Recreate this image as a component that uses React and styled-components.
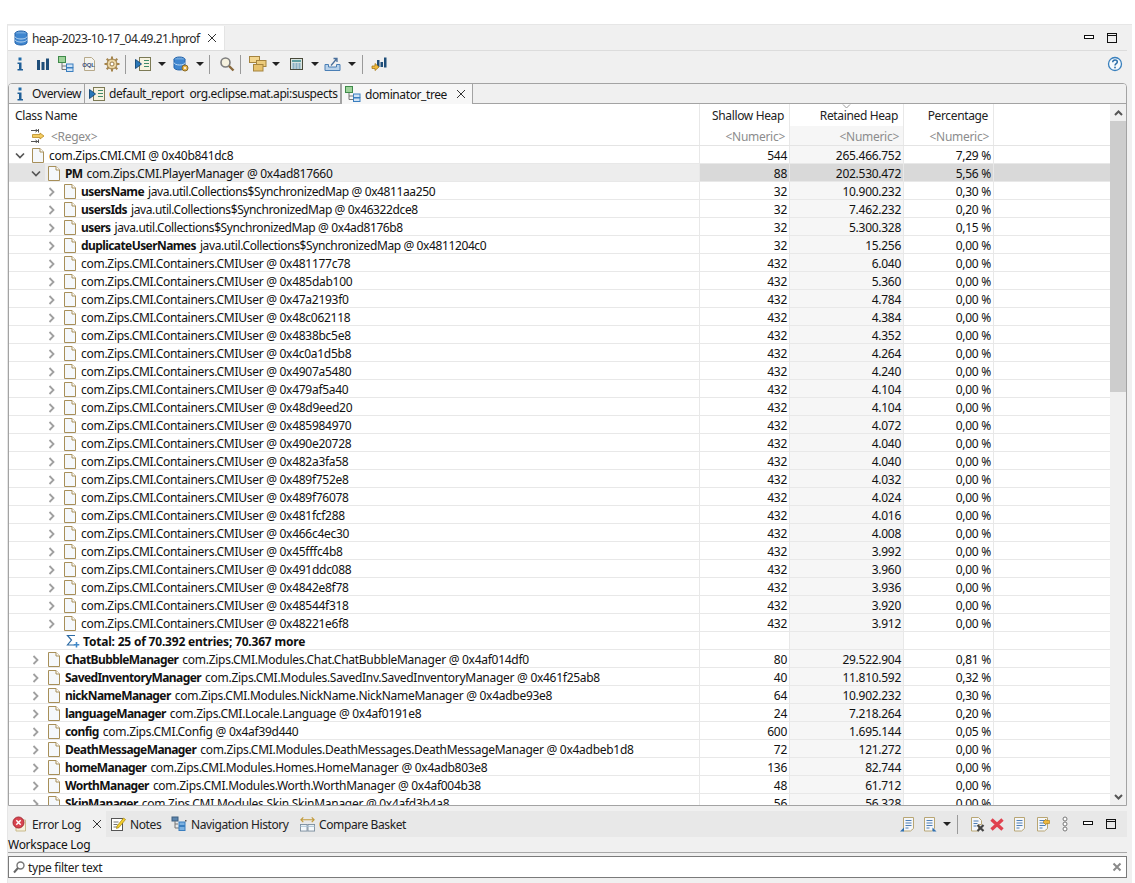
import React from "react";
import styled, { createGlobalStyle } from "styled-components";

const GlobalStyle = createGlobalStyle`
  html, body {
    margin: 0;
    padding: 0;
    background: #fff;
    overflow: hidden;
  }
  * { box-sizing: border-box; }
`;

const Page = styled.div`
  width: 1135px;
  height: 883px;
  padding: 24px 3px 0 7px;
  display: flex;
  flex-direction: column;
  font-family: "Noto Sans", "Open Sans", sans-serif;
  font-size: 12px;
  letter-spacing: -0.28px;
  color: #111;
  overflow: hidden;
`;

const Shell = styled.div`
  flex: 1;
  min-height: 0;
  display: flex;
  flex-direction: column;
  background: #f0f0f0;
  padding-right: 5px;
  border-top: 1px solid #e6e6e6;
  border-left: 1px solid #e6e6e6;
`;

const EditorTabs = styled.div`
  height: 26px;
  flex: none;
  display: flex;
  align-items: stretch;
  justify-content: space-between;
  border-bottom: 1px solid #dcdcdc;
`;

const EditorTab = styled.div`
  width: 217px;
  margin-top: 1px;
  background: #fff;
  display: flex;
  align-items: center;
  padding-left: 5px;
  gap: 3px;
  border-right: 1px solid #e4e4e4;
  font-size: 12px;
  letter-spacing: -0.47px;
  color: #2a2a2a;
  white-space: nowrap;
`;

const TabClose = styled.span`
  display: inline-flex;
  margin-left: ${(p) => p.$left || 6}px;
`;

const WindowButtons = styled.div`
  display: flex;
  align-items: center;
  gap: 11px;
  padding-right: 9px;
`;

const Toolbar = styled.div`
  height: 32px;
  flex: none;
  display: flex;
  align-items: center;
  padding: 0 4px 6px 0;
`;

const ToolButton = styled.span`
  width: ${(p) => p.$w || 23}px;
  height: 18px;
  flex: none;
  display: inline-flex;
  align-items: center;
  justify-content: center;
`;

const Caret = styled.span`
  width: 9px;
  margin: 0 ${(p) => p.$right ?? 6}px 0 ${(p) => p.$left ?? 1}px;
  height: 18px;
  flex: none;
  display: inline-flex;
  align-items: center;
  justify-content: center;
  &::before {
    content: "";
    border-left: 4px solid transparent;
    border-right: 4px solid transparent;
    border-top: 4px solid #222;
  }
`;

const Separator = styled.span`
  width: 1px;
  height: 19px;
  flex: none;
  background: #9a9a9a;
  margin: 0 ${(p) => p.$right ?? 6}px 0 ${(p) => p.$left ?? 6}px;
`;

const Spring = styled.span`
  flex: 1;
`;

const Folder = styled.div`
  flex: none;
  height: 723px;
  display: flex;
  flex-direction: column;
  background: #fff;
  border: 1px solid #a3a3a3;
  border-radius: 4px 4px 0 0;
  overflow: hidden;
`;

const FolderTabs = styled.div`
  height: 20px;
  flex: none;
  display: flex;
  background: #f0f0f0;
  letter-spacing: -0.4px;
`;

const FolderTab = styled.div`
  height: 20px;
  width: ${(p) => p.$w}px;
  flex: none;
  display: flex;
  align-items: center;
  gap: 4px;
  padding-left: ${(p) => p.$pad || 4}px;
  border-right: 1px solid #a3a3a3;
  border-bottom: ${(p) => (p.$active ? "none" : "1px solid #a3a3a3")};
  background: ${(p) => (p.$active ? "#f7f7f7" : "#f0f0f0")};
  border-left: ${(p) => (p.$active ? "1px solid #a3a3a3" : "none")};
  color: #161616;
  white-space: pre;
`;

const FolderFill = styled.div`
  flex: 1;
  border-bottom: 1px solid #a3a3a3;
`;

const TableArea = styled.div`
  flex: 1;
  min-height: 0;
  display: flex;
`;

const Table = styled.div`
  flex: 1;
  min-width: 0;
  display: flex;
  flex-direction: column;
  overflow: hidden;
`;

const HeadRow = styled.div`
  height: 22px;
  flex: none;
  display: flex;
  letter-spacing: -0.36px;
`;

const HeadCell = styled.div`
  width: ${(p) => p.$w}px;
  flex: none;
  display: flex;
  align-items: center;
  justify-content: ${(p) => (p.$left ? "flex-start" : "flex-end")};
  padding: ${(p) => (p.$left ? "0 0 0 6px" : "0 5px 0 0")};
  border-right: 1px solid #e8e8e8;
  color: #222;
  position: relative;
`;

const SortMark = styled.span`
  position: absolute;
  top: 0;
  left: 52px;
  line-height: 0;
`;

const FilterRow = styled.div`
  height: 20px;
  flex: none;
  display: flex;
  border-bottom: 1px solid #e4e4e4;
`;

const FilterCell = styled.div`
  width: ${(p) => p.$w}px;
  flex: none;
  display: flex;
  align-items: center;
  justify-content: ${(p) => (p.$left ? "flex-start" : "flex-end")};
  gap: 4px;
  padding: ${(p) => (p.$left ? "1px 0 0 21px" : "1px 4px 0 0")};
  border-right: 1px solid #e8e8e8;
  background: ${(p) => (p.$sorted ? "#f6f6f6" : "#fff")};
  color: #8c8c8c;
`;

const Filler = styled.div`
  flex: 1;
`;

const Rows = styled.div`
  flex: 1;
  min-height: 0;
  overflow: hidden;
`;

const Row = styled.div`
  height: 18px;
  display: flex;
  border-bottom: 1px solid #e8e8e8;
  background: ${(p) => (p.$selected ? "#d9d9d9" : "#fff")};
`;

const NameCell = styled.div`
  width: 691px;
  flex: none;
  display: flex;
  align-items: center;
  padding: 1px 0 0 ${(p) => 6 + p.$level * 16}px;
  border-right: 1px solid #e8e8e8;
  background: ${(p) =>
    p.$selected
      ? "linear-gradient(to right, #e3e3e3 0 36px, #ededed 36px)"
      : "#fff"};
  white-space: pre;
  overflow: hidden;
`;

const Expander = styled.span`
  width: 10px;
  height: 17px;
  flex: none;
  margin-right: 7px;
  display: inline-flex;
  align-items: center;
  justify-content: center;
  padding-top: 1px;
`;

const NodeIcon = styled.span`
  flex: none;
  width: 12px;
  margin-right: 5px;
  display: inline-flex;
`;

const SumSlot = styled.span`
  flex: none;
  width: 14px;
  margin: 0 3px 0 2px;
  display: inline-flex;
`;

const Field = styled.b`
  font-weight: 700;
  margin-right: 4px;
  letter-spacing: -0.58px;
`;

const ClassText = styled.span`
  letter-spacing: ${(p) => (p.$tight ? "-0.39px" : "-0.28px")};
`;

const TotalLabel = styled.b`
  font-weight: 700;
  letter-spacing: -0.2px;
`;

const ValueCell = styled.div`
  width: ${(p) => p.$w}px;
  flex: none;
  display: flex;
  align-items: center;
  justify-content: flex-end;
  padding: 1px 2px 0 0;
  border-right: 1px solid #e8e8e8;
  background: ${(p) => (p.$selected ? "#d9d9d9" : p.$sorted ? "#f6f6f6" : "transparent")};
`;

const Scrollbar = styled.div`
  width: 16px;
  flex: none;
  display: flex;
  flex-direction: column;
  background: #f0f0f0;
`;

const ScrollArrow = styled.div`
  height: 17px;
  flex: none;
  display: flex;
  align-items: center;
  justify-content: center;
`;

const ScrollThumb = styled.div`
  height: 271px;
  flex: none;
  background: #cdcdcd;
`;

const ScrollTrack = styled.div`
  flex: 1;
`;

const BottomGap = styled.div`
  height: 5px;
  flex: none;
`;

const LogPanel = styled.div`
  flex: 1;
  min-height: 0;
  display: flex;
  flex-direction: column;
`;

const LogTabs = styled.div`
  height: 26px;
  flex: none;
  display: flex;
  align-items: stretch;
  background: #e8e8e8;
  letter-spacing: -0.4px;
`;

const LogTab = styled.div`
  width: ${(p) => p.$w}px;
  flex: none;
  display: flex;
  align-items: center;
  gap: 4px;
  padding-left: ${(p) => p.$pad || 5}px;
  background: ${(p) => (p.$active ? "#f0f0f0" : "transparent")};
  color: #222;
  white-space: pre;
`;

const LogTools = styled.div`
  margin-left: auto;
  display: flex;
  align-items: center;
  padding-right: 4px;
`;

const LogTitle = styled.div`
  height: 15px;
  flex: none;
  display: flex;
  align-items: center;
  color: #111;
`;

const LogRule = styled.div`
  height: 1px;
  flex: none;
  background: #a8a8a8;
  margin-bottom: 3px;
`;

const FilterBox = styled.div`
  height: 22px;
  flex: none;
  display: flex;
  align-items: center;
  gap: 3px;
  padding: 0 4px;
  background: #fff;
  border: 1px solid #7a7a7a;
`;

const FilterText = styled.span`
  flex: 1;
  color: #222;
`;

const Svg = ({ w = 16, h = 16, children }) => (
  <svg width={w} height={h} viewBox={`0 0 ${w} ${h}`} style={{ display: "block" }}>
    {children}
  </svg>
);

const CloseIcon = () => (
  <Svg w={10} h={10}>
    <path d="M1 1l8 8M9 1l-8 8" stroke="#333" strokeWidth="1" fill="none" />
  </Svg>
);

const MinimizeIcon = () => (
  <Svg w={12} h={8}>
    <rect x="1.5" y="1.5" width="9" height="3" fill="#fff" stroke="#111" />
  </Svg>
);

const MaximizeIcon = () => (
  <Svg w={12} h={12}>
    <rect x="1.5" y="1.5" width="9" height="9" fill="none" stroke="#111" />
    <path d="M1.5 3.5h9" stroke="#111" />
  </Svg>
);

const HeapIcon = () => (
  <Svg>
    <ellipse cx="8" cy="3.500" rx="6" ry="2.500" fill="#6ea6dd" stroke="#1e5fa8" />
    <path d="M2 3.500v9c0 1.400 2.700 2.500 6 2.500s6-1.100 6-2.500v-9" fill="#3f86cf" stroke="#1e5fa8" />
    <path d="M2 6.500c0 1.400 2.700 2.500 6 2.500s6-1.100 6-2.500M2 9.500c0 1.400 2.700 2.500 6 2.500s6-1.100 6-2.500" fill="none" stroke="#bcd8f2" />
  </Svg>
);

const InfoIcon = () => (
  <Svg>
    <rect x="6.500" y="1.500" width="3" height="3" fill="#1f6aa8" />
    <path d="M5.500 6.500h4v6.500h1.500v1.500h-5.500V13h1.500V8h-1.500z" fill="#1f5f97" />
  </Svg>
);

const BarsIcon = () => (
  <Svg>
    <rect x="2" y="4" width="3" height="10" fill="#1f4e79" />
    <rect x="6.500" y="6" width="3" height="8" fill="#1f4e79" />
    <rect x="11" y="2.500" width="3" height="11.500" fill="#1f4e79" />
  </Svg>
);

const TreeIcon = () => (
  <Svg>
    <rect x="0.500" y="0.500" width="7" height="6" fill="#9ed39a" stroke="#3f8a4a" />
    <path d="M4 7v6.500h4M4 10h4" fill="none" stroke="#777" />
    <rect x="8.500" y="8" width="6.500" height="3.500" fill="#cfe3f6" stroke="#3a7ebf" />
    <rect x="8.500" y="12" width="6.500" height="3.500" fill="#cfe3f6" stroke="#3a7ebf" />
  </Svg>
);

const OqlIcon = () => (
  <Svg>
    <path d="M3.500 1.500h7l3 3v10h-10z" fill="#f4f4ef" stroke="#b7a98a" />
    <text
      x="7.500"
      y="10.500"
      textAnchor="middle"
      fontFamily="Liberation Sans, sans-serif"
      fontSize="6"
      fontWeight="700"
      letterSpacing="-0.2"
      fill="#3b4f7d"
    >
      OQL
    </text>
  </Svg>
);

const GearIcon = () => (
  <Svg>
    <circle cx="8" cy="8" r="5" fill="#ecd7a5" stroke="#9a7b45" />
    <circle cx="8" cy="8" r="2" fill="#fff" stroke="#9a7b45" />
    <path d="M8 0.500v3M8 12.500v3M0.500 8h3M12.500 8h3M2.700 2.700l2 2M11.300 11.300l2 2M13.300 2.700l-2 2M4.700 11.300l-2 2" stroke="#a5854d" strokeWidth="2" />
  </Svg>
);

const ReportIcon = () => (
  <Svg>
    <rect x="4.500" y="1.500" width="11" height="13" fill="#f6f2e0" stroke="#7c7a55" />
    <path d="M9 4.500h5M9 7.500h5M9 10.500h5" stroke="#3f8a6a" />
    <path d="M0.500 3.500l6 4.500-6 4.500z" fill="#2a78b8" stroke="#1c4f7d" />
  </Svg>
);

const HeapGearIcon = () => (
  <Svg>
    <ellipse cx="6.500" cy="3.500" rx="5.500" ry="2.500" fill="#6ea6dd" stroke="#1e5fa8" />
    <path d="M1 3.500v8c0 1.400 2.500 2.500 5.500 2.500s5.500-1.100 5.500-2.500v-8" fill="#3f86cf" stroke="#1e5fa8" />
    <path d="M1 6.500c0 1.400 2.500 2.500 5.500 2.500s5.500-1.100 5.500-2.500" fill="none" stroke="#bcd8f2" />
    <circle cx="12" cy="12" r="3" fill="#e5b44b" stroke="#8a6a25" />
    <circle cx="12" cy="12" r="1" fill="#fff" />
  </Svg>
);

const SearchIcon = () => (
  <Svg>
    <circle cx="6.500" cy="6.500" r="4.500" fill="#f6f2df" stroke="#7d7d7d" strokeWidth="1.600" />
    <path d="M10 10l4.500 4.500" stroke="#8a6a3c" strokeWidth="2.400" />
  </Svg>
);

const FilterGlass = () => (
  <Svg w={12} h={13}>
    <circle cx="7.500" cy="4.500" r="3.500" fill="#fff" stroke="#777" strokeWidth="1.400" />
    <path d="M5 7l-4 4.500" stroke="#666" strokeWidth="2" />
  </Svg>
);

const GroupIcon = () => (
  <Svg w={18} h={18}>
    <rect x="0.500" y="1.500" width="10" height="6" fill="#f3d68f" stroke="#a5843f" />
    <rect x="7.500" y="5.500" width="9.500" height="6" fill="#eccb7c" stroke="#a5843f" />
    <rect x="4.500" y="9.500" width="9.500" height="6.500" fill="#e7c16c" stroke="#a5843f" />
  </Svg>
);

const CalcIcon = () => (
  <Svg>
    <rect x="2.500" y="2.500" width="12" height="11" fill="#d9e4e0" stroke="#4a4a3a" />
    <rect x="4" y="4" width="9" height="2" fill="#5f9f9f" />
    <path d="M4.500 8h2M7.500 8h2M10.500 8h2M4.500 10h2M7.500 10h2M10.500 10h2M4.500 12h2M7.500 12h2M10.500 12h2" stroke="#3e7ea6" />
  </Svg>
);

const ExportIcon = () => (
  <Svg w={18} h={16}>
    <path d="M1 8.500v6h15v-6h-3.500v2.500h-8V8.500z" fill="#b9d2ea" stroke="#4a7fb5" />
    <path d="M7 9.500L12.500 3M9.500 2.500h3.500v3.500" fill="none" stroke="#4a6f9b" strokeWidth="1.300" />
  </Svg>
);

const MergeIcon = () => (
  <Svg>
    <rect x="6" y="4" width="2.500" height="7" fill="#1f4e79" />
    <rect x="9.500" y="6" width="2.500" height="5" fill="#1f4e79" />
    <rect x="13" y="1.500" width="2.500" height="10" fill="#1f4e79" />
    <path d="M1 10h3V7.500l4 3.500-4 3.500V12.500H1z" fill="#efb93e" stroke="#a67a18" strokeWidth="0.800" />
  </Svg>
);

const HelpIcon = () => (
  <Svg>
    <circle cx="8" cy="8" r="6.500" fill="#f4f9fd" stroke="#3a80bd" strokeWidth="1.300" />
    <path d="M5.700 6.200c0-1.400 1-2.200 2.300-2.200s2.300.8 2.300 2c0 1.700-2.300 1.700-2.300 3.500" fill="none" stroke="#2c6ea8" strokeWidth="1.500" />
    <rect x="7.200" y="10.700" width="1.600" height="1.600" fill="#2c6ea8" />
  </Svg>
);

const PageIcon = () => (
  <Svg w={12} h={15}>
    <path d="M0.500 0.500h7.500l3.500 3.500v10.500H0.500z" fill="#f5f8fb" stroke="#a78f59" />
    <path d="M8 0.500v3.500h3.500" fill="#fff" stroke="#a78f59" />
  </Svg>
);

const ChevronRight = () => (
  <Svg w={8} h={10}>
    <path d="M1.500 1l4 4-4 4" fill="none" stroke="#a0a0a0" strokeWidth="1.800" />
  </Svg>
);

const ChevronDown = () => (
  <Svg w={10} h={8}>
    <path d="M1 1.500l4 4 4-4" fill="none" stroke="#555" strokeWidth="1.700" />
  </Svg>
);

const SumIcon = () => (
  <Svg w={14} h={14}>
    <path d="M9 1.500H1.500l4 4.500-4 5h7" fill="none" stroke="#2c6aa3" strokeWidth="1.200" />
    <path d="M10.500 8v5.500M7.800 10.800h5.500" stroke="#3f88c9" strokeWidth="1.600" />
  </Svg>
);

const RegexIcon = () => (
  <Svg w={17} h={14}>
    <path d="M1 1.500h7M1 12.500h7M8.500 0v3.500M8.500 10.500v3.500M5.500 0l2 1.500-2 1.500M5.500 11l2 1.500-2 1.500" fill="none" stroke="#555" />
    <path d="M2.500 5.500h7.500V4l4 3-4 3V8.500H2.500z" fill="#f4cd63" stroke="#b98a22" strokeWidth="0.800" />
  </Svg>
);

const ScrollUp = () => (
  <Svg w={9} h={6}>
    <path d="M1 5l3.500-3.500L8 5" fill="none" stroke="#555" strokeWidth="2" />
  </Svg>
);

const ScrollDown = () => (
  <Svg w={9} h={6}>
    <path d="M1 1l3.500 3.500L8 1" fill="none" stroke="#555" strokeWidth="2" />
  </Svg>
);

const SortArrow = () => (
  <Svg w={9} h={5}>
    <path d="M1 0.500l3.500 3.500L8 0.500" fill="none" stroke="#999" />
  </Svg>
);

const ErrorLogIcon = () => (
  <Svg>
    <path d="M4 4h9.500v11H4z" fill="#f6f1dc" stroke="#c9b98a" />
    <circle cx="6.500" cy="6.500" r="5.500" fill="#d8444f" stroke="#a52a35" />
    <path d="M4.300 4.300l4.400 4.400M8.700 4.300l-4.400 4.400" stroke="#fff" strokeWidth="1.500" />
  </Svg>
);

const NotesIcon = () => (
  <Svg>
    <rect x="1.500" y="2.500" width="11" height="12" fill="#fff" stroke="#555" />
    <path d="M3.500 6h5M3.500 8.500h4M3.500 11h5" stroke="#777" />
    <path d="M7 10l6.500-8 2 1.500-6.500 8-2.500 1z" fill="#f4cd2d" stroke="#a08410" strokeWidth="0.700" />
  </Svg>
);

const HistoryIcon = () => (
  <Svg>
    <rect x="1" y="1" width="6" height="4" fill="#5c85ad" stroke="#3d5f80" />
    <path d="M4 5v7h4M4 8h3" fill="none" stroke="#777" />
    <rect x="8" y="6" width="6" height="3.500" fill="#7bb0e0" stroke="#3a7ebf" />
    <rect x="8" y="10.500" width="6" height="4" fill="#7bb0e0" stroke="#3a7ebf" />
    <rect x="14" y="4" width="1.500" height="1.500" fill="#555" />
  </Svg>
);

const CompareIcon = () => (
  <Svg>
    <path d="M1 3.500h14M3.500 1L1 3.500 3.500 6M12.500 1L15 3.500 12.500 6" fill="none" stroke="#c29a3a" strokeWidth="1.200" />
    <rect x="0.500" y="8.500" width="7" height="7" fill="#f4f8fb" stroke="#7d8f9f" />
    <rect x="8.500" y="8.500" width="7" height="7" fill="#f4f8fb" stroke="#7d8f9f" />
    <path d="M0.500 10.500h15" stroke="#a9c0d4" />
  </Svg>
);

const ListDoc = ({ accent }) => (
  <Svg>
    <path d="M3.500 1.500h10v11l-3 2.500h-7z" fill="#f4f7fb" stroke="#b9a674" />
    <path d="M5.500 4.500h6M5.500 7h6M5.500 9.500h6M5.500 12h3" stroke="#4f7fb5" />
    {accent === "left" && <path d="M0 15.500l4-4v4z" fill="#2f6fb0" />}
    {accent === "right" && <path d="M15.500 15.500l-4-4v4z" fill="#2f6fb0" />}
    {accent === "paste" && <path d="M9 6l3-3v1.500h3.500v3H12V9z" fill="#efb93e" stroke="#a67a18" strokeWidth="0.600" />}
  </Svg>
);

const ClearLogIcon = () => (
  <Svg>
    <path d="M2.500 1.500h7l3 3v4h-3v6.500h-7z" fill="#f4f7fb" stroke="#b9a674" />
    <path d="M4.500 5h5M4.500 7.500h4M4.500 10h3" stroke="#4f7fb5" />
    <path d="M8.500 9l6 6M14.500 9l-6 6" stroke="#444" strokeWidth="2.200" />
  </Svg>
);

const RedCross = () => (
  <Svg>
    <path d="M2.500 3.500l11 10M13.500 3.500l-11 10" stroke="#e0424f" strokeWidth="3.400" />
  </Svg>
);

const ViewMenuIcon = () => (
  <Svg w={6} h={16}>
    <circle cx="3" cy="3" r="2" fill="#fff" stroke="#777" />
    <circle cx="3" cy="8" r="2" fill="#fff" stroke="#777" />
    <circle cx="3" cy="13" r="2" fill="#fff" stroke="#777" />
  </Svg>
);

const ClearInputIcon = () => (
  <Svg w={10} h={10}>
    <path d="M1.500 1.500l7 7M8.500 1.500l-7 7" stroke="#8a8a8a" strokeWidth="2" />
  </Svg>
);

const userRows = [
  ["481177c78", "6.040"],
  ["485dab100", "5.360"],
  ["47a2193f0", "4.784"],
  ["48c062118", "4.384"],
  ["4838bc5e8", "4.352"],
  ["4c0a1d5b8", "4.264"],
  ["4907a5480", "4.240"],
  ["479af5a40", "4.104"],
  ["48d9eed20", "4.104"],
  ["485984970", "4.072"],
  ["490e20728", "4.040"],
  ["482a3fa58", "4.040"],
  ["489f752e8", "4.032"],
  ["489f76078", "4.024"],
  ["481fcf288", "4.016"],
  ["466c4ec30", "4.008"],
  ["45fffc4b8", "3.992"],
  ["491ddc088", "3.960"],
  ["4842e8f78", "3.936"],
  ["48544f318", "3.920"],
  ["48221e6f8", "3.912"],
].map(([addr, retained]) => ({
  level: 2,
  text: `com.Zips.CMI.Containers.CMIUser @ 0x${addr}`,
  shallow: "432",
  retained,
  pct: "0,00 %",
}));

const rows = [
  { level: 0, open: true, text: "com.Zips.CMI.CMI @ 0x40b841dc8", shallow: "544", retained: "265.466.752", pct: "7,29 %" },
  { level: 1, open: true, selected: true, field: "PM", text: "com.Zips.CMI.PlayerManager @ 0x4ad817660", shallow: "88", retained: "202.530.472", pct: "5,56 %" },
  { level: 2, field: "usersName", text: "java.util.Collections$SynchronizedMap @ 0x4811aa250", shallow: "32", retained: "10.900.232", pct: "0,30 %" },
  { level: 2, field: "usersIds", text: "java.util.Collections$SynchronizedMap @ 0x46322dce8", shallow: "32", retained: "7.462.232", pct: "0,20 %" },
  { level: 2, field: "users", text: "java.util.Collections$SynchronizedMap @ 0x4ad8176b8", shallow: "32", retained: "5.300.328", pct: "0,15 %" },
  { level: 2, field: "duplicateUserNames", text: "java.util.Collections$SynchronizedMap @ 0x4811204c0", shallow: "32", retained: "15.256", pct: "0,00 %" },
  ...userRows,
  { level: 2, total: "Total: 25 of 70.392 entries; 70.367 more" },
  { level: 1, field: "ChatBubbleManager", text: "com.Zips.CMI.Modules.Chat.ChatBubbleManager @ 0x4af014df0", shallow: "80", retained: "29.522.904", pct: "0,81 %" },
  { level: 1, field: "SavedInventoryManager", text: "com.Zips.CMI.Modules.SavedInv.SavedInventoryManager @ 0x461f25ab8", shallow: "40", retained: "11.810.592", pct: "0,32 %" },
  { level: 1, field: "nickNameManager", text: "com.Zips.CMI.Modules.NickName.NickNameManager @ 0x4adbe93e8", shallow: "64", retained: "10.902.232", pct: "0,30 %" },
  { level: 1, field: "languageManager", text: "com.Zips.CMI.Locale.Language @ 0x4af0191e8", shallow: "24", retained: "7.218.264", pct: "0,20 %" },
  { level: 1, field: "config", text: "com.Zips.CMI.Config @ 0x4af39d440", shallow: "600", retained: "1.695.144", pct: "0,05 %" },
  { level: 1, field: "DeathMessageManager", text: "com.Zips.CMI.Modules.DeathMessages.DeathMessageManager @ 0x4adbeb1d8", shallow: "72", retained: "121.272", pct: "0,00 %" },
  { level: 1, field: "homeManager", text: "com.Zips.CMI.Modules.Homes.HomeManager @ 0x4adb803e8", shallow: "136", retained: "82.744", pct: "0,00 %" },
  { level: 1, field: "WorthManager", text: "com.Zips.CMI.Modules.Worth.WorthManager @ 0x4af004b38", shallow: "48", retained: "61.712", pct: "0,00 %" },
  { level: 1, field: "SkinManager", text: "com.Zips.CMI.Modules.Skin.SkinManager @ 0x4afd3b4a8", shallow: "56", retained: "56.328", pct: "0,00 %" },
];

const TreeRow = ({ row }) => (
  <Row $selected={row.selected}>
    <NameCell $level={row.level} $selected={row.selected}>
      <Expander>
        {row.total ? null : row.open ? <ChevronDown /> : <ChevronRight />}
      </Expander>
      {row.total ? (
        <>
          <SumSlot>
            <SumIcon />
          </SumSlot>
          <TotalLabel>{row.total}</TotalLabel>
        </>
      ) : (
        <>
          <NodeIcon>
            <PageIcon />
          </NodeIcon>
          {row.field && <Field>{row.field}</Field>}
          <ClassText $tight={row.text.startsWith("java")}>{row.text}</ClassText>
        </>
      )}
    </NameCell>
    <ValueCell $w={90} $selected={row.selected}>{row.shallow}</ValueCell>
    <ValueCell $w={114} $sorted $selected={row.selected}>{row.retained}</ValueCell>
    <ValueCell $w={90} $selected={row.selected}>{row.pct}</ValueCell>
    <Filler />
  </Row>
);

export default function App() {
  return (
    <Page>
      <GlobalStyle />
      <Shell>
        <EditorTabs>
          <EditorTab>
            <HeapIcon />
            heap-2023-10-17_04.49.21.hprof
            <TabClose $left={4}>
              <CloseIcon />
            </TabClose>
          </EditorTab>
          <WindowButtons>
            <MinimizeIcon />
            <MaximizeIcon />
          </WindowButtons>
        </EditorTabs>

        <Toolbar>
          <ToolButton><InfoIcon /></ToolButton>
          <ToolButton><BarsIcon /></ToolButton>
          <ToolButton><TreeIcon /></ToolButton>
          <ToolButton><OqlIcon /></ToolButton>
          <ToolButton><GearIcon /></ToolButton>
          <Separator $left={2} $right={7} />
          <ToolButton $w={20}><ReportIcon /></ToolButton>
          <Caret $left={4} $right={5} />
          <ToolButton $w={20}><HeapGearIcon /></ToolButton>
          <Caret $left={4} $right={5} />
          <Separator $left={0} $right={7} />
          <ToolButton $w={19}><SearchIcon /></ToolButton>
          <Separator $left={4} $right={7} />
          <ToolButton $w={19}><GroupIcon /></ToolButton>
          <Caret $left={4} $right={6} />
          <ToolButton $w={20}><CalcIcon /></ToolButton>
          <Caret $left={4} $right={4} />
          <ToolButton $w={20}><ExportIcon /></ToolButton>
          <Caret $left={4} $right={6} />
          <Separator $left={0} $right={6} />
          <ToolButton $w={19}><MergeIcon /></ToolButton>
          <Spring />
          <HelpIcon />
        </Toolbar>

        <Folder>
          <FolderTabs>
            <FolderTab $w={76} $pad={3}>
              <InfoIcon />
              Overview
            </FolderTab>
            <FolderTab $w={256} $pad={4}>
              <ReportIcon />
              {"default_report  org.eclipse.mat.api:suspects"}
            </FolderTab>
            <FolderTab $w={132} $pad={3} $active>
              <TreeIcon />
              dominator_tree
              <TabClose $left={5}>
                <CloseIcon />
              </TabClose>
            </FolderTab>
            <FolderFill />
          </FolderTabs>

          <TableArea>
            <Table>
              <HeadRow>
                <HeadCell $w={691} $left>Class Name</HeadCell>
                <HeadCell $w={90}>Shallow Heap</HeadCell>
                <HeadCell $w={114}>
                  <SortMark><SortArrow /></SortMark>
                  Retained Heap
                </HeadCell>
                <HeadCell $w={90}>Percentage</HeadCell>
                <Filler />
              </HeadRow>
              <FilterRow>
                <FilterCell $w={691} $left>
                  <RegexIcon />
                  {"<Regex>"}
                </FilterCell>
                <FilterCell $w={90}>{"<Numeric>"}</FilterCell>
                <FilterCell $w={114} $sorted>{"<Numeric>"}</FilterCell>
                <FilterCell $w={90}>{"<Numeric>"}</FilterCell>
                <Filler />
              </FilterRow>
              <Rows>
                {rows.map((row, i) => (
                  <TreeRow key={i} row={row} />
                ))}
              </Rows>
            </Table>
            <Scrollbar>
              <ScrollArrow><ScrollUp /></ScrollArrow>
              <ScrollThumb />
              <ScrollTrack />
              <ScrollArrow><ScrollDown /></ScrollArrow>
            </Scrollbar>
          </TableArea>
        </Folder>

        <BottomGap />

        <LogPanel>
          <LogTabs>
            <LogTab $w={98} $pad={4} $active>
              <ErrorLogIcon />
              Error Log
              <TabClose $left={7}>
                <CloseIcon />
              </TabClose>
            </LogTab>
            <LogTab $w={61} $pad={4}>
              <NotesIcon />
              Notes
            </LogTab>
            <LogTab $w={129} $pad={4}>
              <HistoryIcon />
              Navigation History
            </LogTab>
            <LogTab $w={110} $pad={4}>
              <CompareIcon />
              Compare Basket
            </LogTab>
            <LogTools>
              <ToolButton><ListDoc accent="left" /></ToolButton>
              <ToolButton $w={20}><ListDoc accent="right" /></ToolButton>
              <Caret $left={3} $right={6} />
              <Separator $left={0} $right={9} />
              <ToolButton $w={20}><ClearLogIcon /></ToolButton>
              <ToolButton $w={20}><RedCross /></ToolButton>
              <ToolButton $w={24}><ListDoc /></ToolButton>
              <ToolButton $w={22}><ListDoc accent="paste" /></ToolButton>
              <ToolButton $w={24}><ViewMenuIcon /></ToolButton>
              <ToolButton $w={22}><MinimizeIcon /></ToolButton>
              <ToolButton $w={24}><MaximizeIcon /></ToolButton>
            </LogTools>
          </LogTabs>
          <LogTitle>Workspace Log</LogTitle>
          <LogRule />
          <FilterBox>
            <FilterGlass />
            <FilterText>type filter text</FilterText>
            <ClearInputIcon />
          </FilterBox>
        </LogPanel>
      </Shell>
    </Page>
  );
}
